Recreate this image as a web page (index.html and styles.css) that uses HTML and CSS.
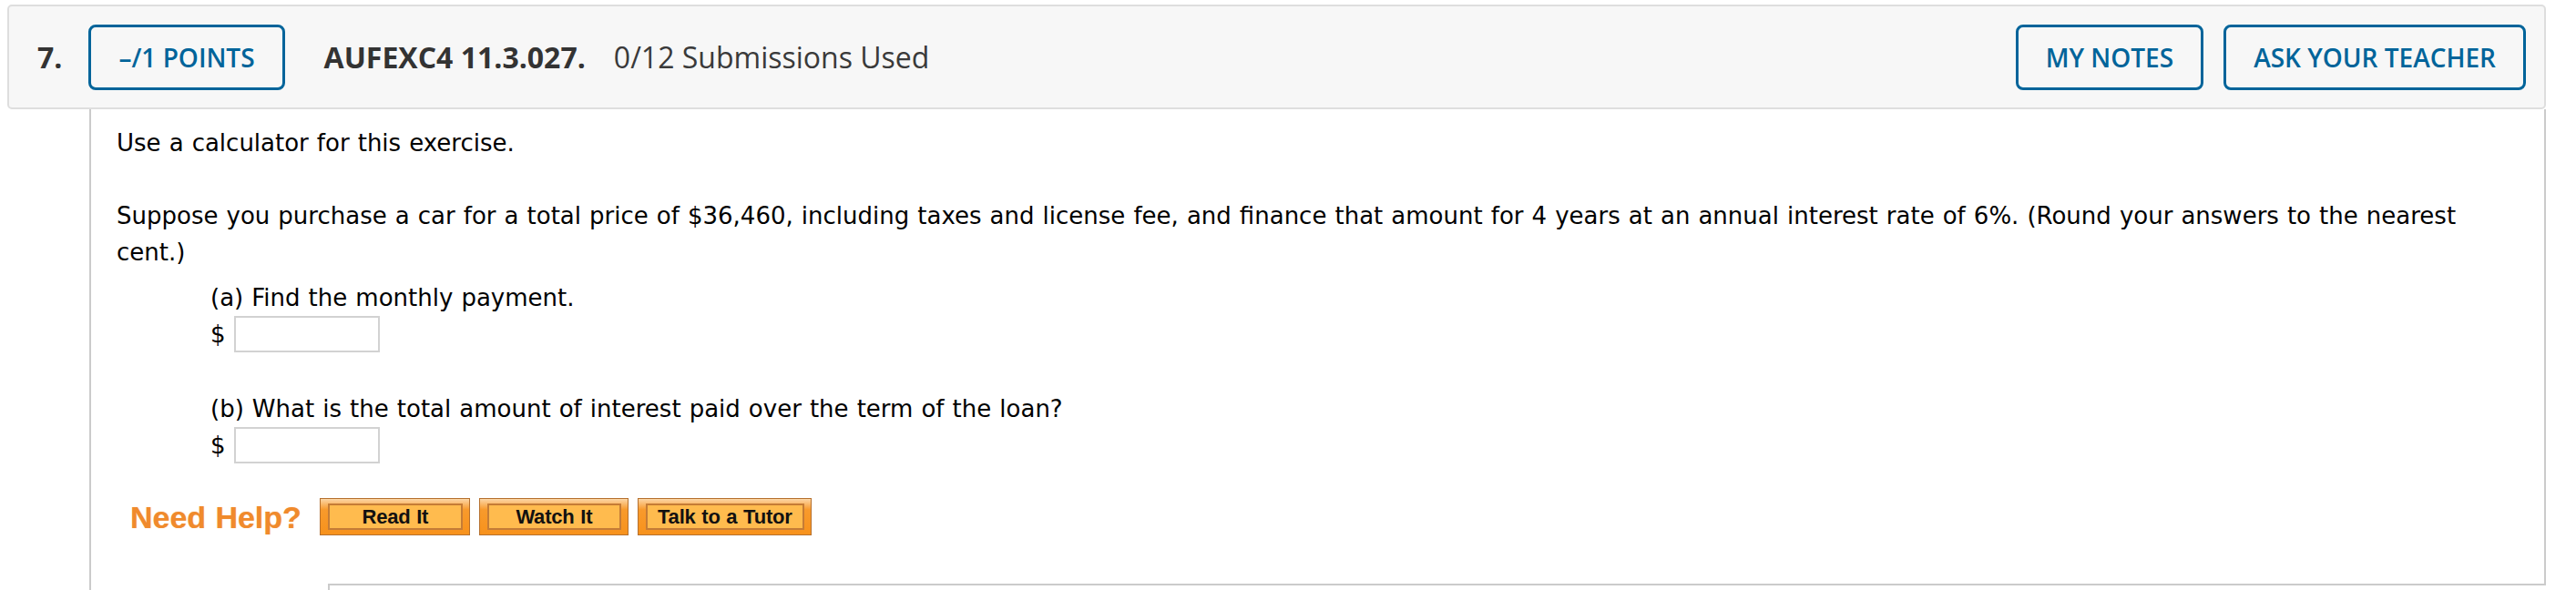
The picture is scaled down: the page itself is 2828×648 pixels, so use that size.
FILE: index.html
```html
<!DOCTYPE html>
<html lang="en">
<head>
<meta charset="utf-8">
<title>Question 7</title>
<link rel="stylesheet" href="styles.css">
</head>
<body>
<div class="question">
  <div class="qhead">
    <span class="qnum">7.</span>
    <span class="obtn">&ndash;/1 POINTS</span>
    <span class="qtitle">AUFEXC4 11.3.027.</span>
    <span class="qsubs">0/12 Submissions Used</span>
    <div class="qactions">
      <span class="obtn">MY NOTES</span>
      <span class="obtn">ASK YOUR TEACHER</span>
    </div>
  </div>
  <div class="qmain">
    <div class="qbody">
      <p class="intro">Use a calculator for this exercise.</p>
      <p class="prompt">Suppose you purchase a car for a total price of $36,460, including taxes and license fee, and finance that amount for 4 years at an annual interest rate of 6%. (Round your answers to the nearest cent.)</p>
      <div class="parts">
        <div class="part">
          <div class="part-q">(a) Find the monthly payment.</div>
          <div class="answer-row"><span class="dollar">$</span><span class="answer-box"></span></div>
        </div>
        <div class="part">
          <div class="part-q">(b) What is the total amount of interest paid over the term of the loan?</div>
          <div class="answer-row"><span class="dollar">$</span><span class="answer-box"></span></div>
        </div>
      </div>
      <div class="help-row">
        <span class="need-help">Need Help?</span>
        <span class="help-btn w-read"><span class="help-in">Read It</span></span>
        <span class="help-btn w-watch"><span class="help-in">Watch It</span></span>
        <span class="help-btn w-tutor"><span class="help-in">Talk to a Tutor</span></span>
      </div>
    </div>
    <div class="qfoot"></div>
  </div>
</div>
</body>
</html>
```

FILE: styles.css
```css
html, body {
  margin: 0;
  background: #ffffff;
}
body {
  padding: 5px 33px 0 8px;
}
.question {
  width: 100%;
}
.qhead {
  display: flex;
  align-items: center;
  height: 115px;
  box-sizing: border-box;
  border: 2px solid #dedede;
  border-radius: 5px;
  background: #f7f7f7;
  padding: 0 20px 0 31px;
  font-family: "Open Sans", "Liberation Sans", sans-serif;
  color: #333333;
  white-space: nowrap;
}
.qnum {
  font-weight: 700;
  font-size: 32px;
  margin-right: 29px;
}
.obtn {
  display: flex;
  align-items: center;
  height: 72px;
  box-sizing: border-box;
  border: 3px solid #00649a;
  border-radius: 8px;
  padding: 0 30px;
  font-size: 28px;
  font-weight: 600;
  color: #00649a;
}
.qtitle {
  margin-left: 43px;
  font-size: 32px;
  font-weight: 700;
}
.qsubs {
  margin-left: 31px;
  font-size: 32px;
  font-weight: 400;
  color: #3a3a3a;
}
.qactions {
  margin-left: auto;
  display: flex;
  gap: 22px;
}
.qmain {
  margin-left: 90px;
  border-left: 2px solid #cbcbcb;
}
.qbody {
  height: 521px;
  box-sizing: border-box;
  border-right: 2px solid #cbcbcb;
  padding: 17px 40px 0 28px;
  font-family: "DejaVu Sans", Verdana, sans-serif;
  font-size: 26px;
  line-height: 40px;
  word-spacing: 0.8px;
  color: #000000;
}
.intro {
  margin: 0 0 40px 0;
}
.prompt {
  margin: 0;
}
.parts {
  margin-top: 10px;
  padding-left: 103px;
}
.part + .part {
  margin-top: 42px;
}
.answer-row {
  display: flex;
  align-items: center;
  height: 40px;
}
.dollar {
  width: 26px;
}
.answer-box {
  display: block;
  width: 160px;
  height: 40px;
  box-sizing: border-box;
  border: 2px solid #d2d2d2;
  background: #ffffff;
}
.help-row {
  display: flex;
  align-items: center;
  margin-top: 38px;
  padding-left: 15px;
}
.need-help {
  font-family: "Liberation Sans", Arial, sans-serif;
  font-weight: 700;
  font-size: 34px;
  color: #f08a2c;
  margin-right: 20px;
  text-shadow: 0 0 1px rgba(240, 138, 44, 0.6);
}
.help-btn {
  display: block;
  height: 41px;
  box-sizing: border-box;
  border: 1px solid #b5702e;
  background: linear-gradient(#fcd6a6 0%, #f89a2c 30%, #f7921c 100%);
  padding: 5px 7px 5px 8px;
  margin-right: 10px;
}
.help-in {
  display: flex;
  align-items: center;
  justify-content: center;
  height: 100%;
  box-sizing: border-box;
  border: 2px solid #c57c36;
  background: #ffbb4e;
  font-family: "Liberation Sans", Arial, sans-serif;
  font-weight: 700;
  font-size: 22px;
  color: #111111;
  letter-spacing: -0.2px;
}
.w-read { width: 165px; }
.w-watch { width: 164px; }
.w-tutor { width: 191px; }
.qfoot {
  margin-left: 260px;
  height: 20px;
  border-top: 2px solid #cbcbcb;
  border-left: 2px solid #cbcbcb;
}
```
